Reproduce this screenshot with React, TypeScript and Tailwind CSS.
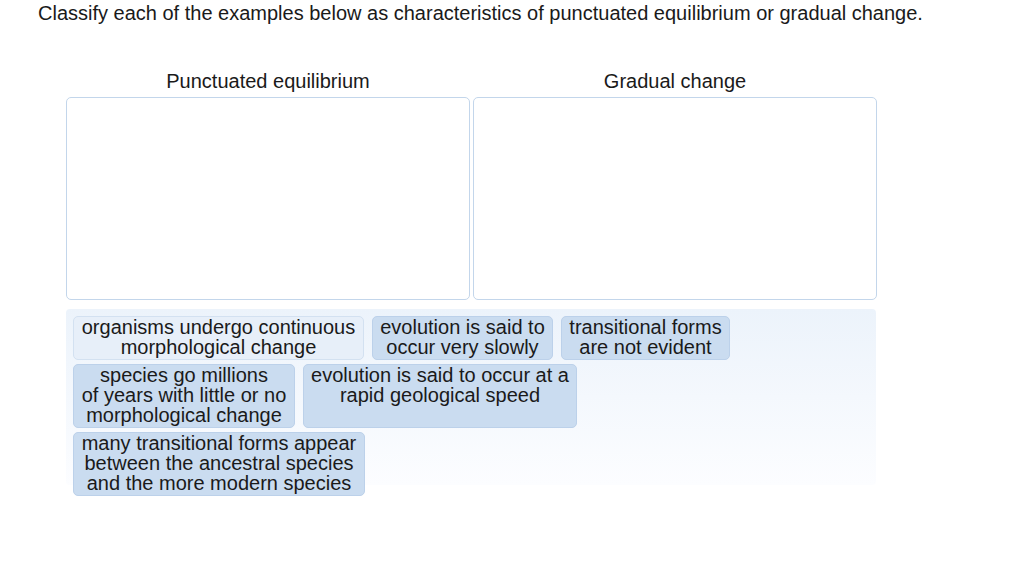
const items = [
	{ lines: ["organisms undergo continuous", "morphological change"], w: "w-[291px]", light: true },
	{ lines: ["evolution is said to", "occur very slowly"], w: "w-[181px]" },
	{ lines: ["transitional forms", "are not evident"], w: "w-[169px]" },
	{ lines: ["species go millions", "of years with little or no", "morphological change"], w: "w-[222px]" },
	{ lines: ["evolution is said to occur at a", "rapid geological speed"], w: "w-[274px]" },
	{ lines: ["many transitional forms appear", "between the ancestral species", "and the more modern species"], w: "w-[292px]" },
];

export default function App() {
	return (
		<div className="w-[1024px] h-[572px] bg-white text-[#1a1a1a] font-['Liberation_Sans',Arial,sans-serif]">
			<p className="pl-[38px] pt-[2px] text-[20px] leading-[22px] whitespace-nowrap">
				Classify each of the examples below as characteristics of punctuated equilibrium or gradual change.
			</p>

			{/* Drop targets */}
			<div className="flex gap-[3px] pl-[66px] pt-[46px]">
				{["Punctuated equilibrium", "Gradual change"].map((label) => (
					<div key={label} className="w-[404px]">
						<div className="text-center text-[20px] leading-[22px] mb-[5px]">{label}</div>
						<div className="h-[203px] rounded-[5px] border border-[#c3d6eb] bg-white" />
					</div>
				))}
			</div>

			{/* Answer pool */}
			<div className="ml-[66px] mt-[9px] w-[810px] h-[176px] rounded-[4px] bg-gradient-to-b from-[#ecf3fb] to-[#fcfdff] p-[7px] flex flex-wrap content-start gap-x-[8px] gap-y-[4px]">
				{items.map((it) => (
					<div
						key={it.lines[0]}
						className={`${it.w} rounded-[5px] border pt-[0px] pb-[2px] text-center text-[20px] leading-[20px] whitespace-nowrap ${
							it.light ? "bg-[#e7eff9] border-[#d3e1f1]" : "bg-[#cadcf0] border-[#bcd1ea]"
						}`}
					>
						{it.lines.map((l) => (
							<div key={l}>{l}</div>
						))}
					</div>
				))}
			</div>
		</div>
	);
}
